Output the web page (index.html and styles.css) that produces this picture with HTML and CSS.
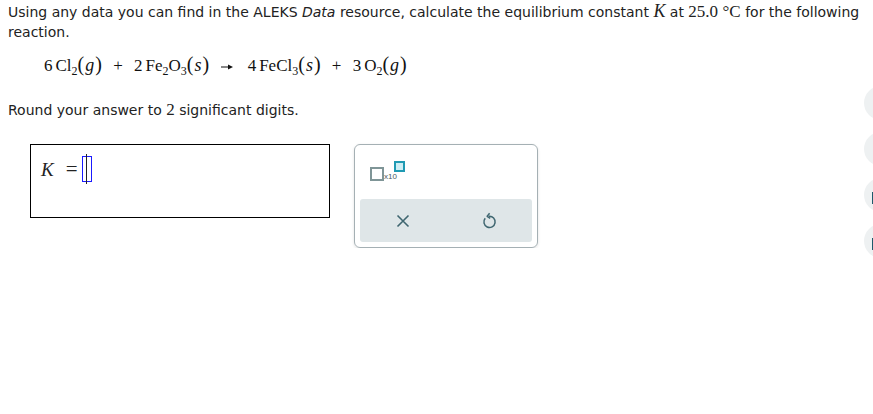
FILE: index.html
```html
<!DOCTYPE html>
<html>
<head>
<meta charset="utf-8">
<link rel="stylesheet" href="styles.css">
</head>
<body>
<div class="page">
  <p class="prompt">Using any data you can find in the ALEKS <i>Data</i> resource, calculate the equilibrium constant <span class="mi">K</span> at <span class="mn">25.0</span> <span class="mn">°C</span> for the following reaction.</p>
  <div class="equation">
    <span>6</span><span class="sp1"></span><span>Cl<sub>2</sub></span><span class="paren">(</span><i>g</i><span class="paren">)</span>
    <span class="op">+</span>
    <span>2</span><span class="sp1"></span><span>Fe<sub>2</sub>O<sub>3</sub></span><span class="paren">(</span><i>s</i><span class="paren">)</span>
    <svg class="arrow" width="12" height="8" viewBox="0 0 12 8"><path d="M0 4 H8" stroke="#111" stroke-width="1"/><path d="M7 1.5 L12 4 L7 6.5 Z" fill="#111"/></svg>
    <span>4</span><span class="sp1"></span><span>FeCl<sub>3</sub></span><span class="paren">(</span><i>s</i><span class="paren">)</span>
    <span class="op">+</span>
    <span>3</span><span class="sp1"></span><span>O<sub>2</sub></span><span class="paren">(</span><i>g</i><span class="paren">)</span>
  </div>
  <p class="round">Round your answer to <span class="mn">2</span> significant digits.</p>
  <div class="work">
    <div class="answer">
      <span class="kvar">K</span>
      <span class="eq">=</span>
      <span class="slot"><span class="caret"></span></span>
    </div>
    <div class="palette">
      <div class="palette-top">
        <span class="sci">
          <span class="box-big"></span>
          <span class="x10">x10</span>
          <span class="box-small"></span>
        </span>
      </div>
      <div class="palette-bar">
        <svg class="ico" width="14" height="14" viewBox="0 0 14 14"><path d="M1.5 1.5 L12.5 12.5 M12.5 1.5 L1.5 12.5" stroke="#3f6670" stroke-width="1.6" fill="none"/></svg>
        <svg class="ico" width="16" height="17" viewBox="0 0 16 17"><path d="M4.2 6.3 A5.6 5.6 0 1 0 8 4.3" stroke="#3f6670" stroke-width="1.5" fill="none"/><path d="M8.6 1.2 L6.2 4.3 L9.2 6.4" stroke="#3f6670" stroke-width="1.5" fill="none" stroke-linejoin="round"/></svg>
      </div>
    </div>
  </div>
</div>
<div class="side">
  <span class="side-btn"></span>
  <span class="side-btn"></span>
  <span class="side-btn"><span class="mark"></span></span>
  <span class="side-btn"><span class="mark"></span></span>
</div>
</body>
</html>
```

FILE: styles.css
```css
html, body {
  margin: 0;
  padding: 0;
  background: #ffffff;
}
body {
  font-family: "DejaVu Sans", Verdana, sans-serif;
  font-size: 14px;
  color: #222222;
  overflow: hidden;
}
.page {
  padding: 2px 8px 0 8px;
}
.prompt {
  margin: 0;
  line-height: 20px;
  width: 862px;
}
.mi {
  font-family: "Liberation Serif", serif;
  font-style: italic;
  font-size: 18px;
  line-height: 1;
}
.mn {
  font-family: "Liberation Serif", serif;
  font-size: 17px;
  line-height: 1;
}
.equation {
  font-family: "Liberation Serif", serif;
  font-size: 17px;
  color: #111;
  margin: 7px 0 0 36px;
  height: 30px;
  line-height: 30px;
  white-space: nowrap;
}
.equation sub {
  font-size: 12px;
  vertical-align: -4px;
  line-height: 0;
}
.equation i {
  font-size: 18px;
  margin: 0 1px;
}
.paren {
  font-size: 20px;
}
.sp1 {
  display: inline-block;
  width: 3px;
}
.op {
  margin: 0 7px;
}
.arrow {
  margin: 0 10px 0 8px;
  vertical-align: middle;
}
.round {
  margin: 21px 0 0 0;
  line-height: 20px;
}
.work {
  display: flex;
  align-items: flex-start;
  margin: 24px 0 0 22px;
}
.answer {
  width: 300px;
  height: 74px;
  border: 1px solid #000;
  display: flex;
  align-items: flex-start;
  padding: 11px 0 0 10px;
  box-sizing: border-box;
  font-family: "Liberation Serif", serif;
}
.kvar {
  font-style: italic;
  font-size: 19px;
  line-height: 24px;
  margin-top: 2px;
}
.eq {
  font-size: 21px;
  line-height: 24px;
  margin: 1px 0 0 12px;
}
.slot {
  position: relative;
  width: 8px;
  height: 24px;
  border: 1px solid #1a1aff;
  margin-left: 4px;
}
.caret {
  position: absolute;
  left: 3px;
  top: -3px;
  width: 1px;
  height: 30px;
  background: #222;
}
.palette {
  width: 184px;
  height: 104px;
  margin-left: 24px;
  border: 1px solid #a5b0b4;
  border-radius: 6px;
  box-shadow: 0 1px 3px rgba(0,0,0,0.12);
  box-sizing: border-box;
  padding: 0 5px 5px 5px;
  display: flex;
  flex-direction: column;
}
.palette-top {
  height: 54px;
  position: relative;
}
.sci {
  position: absolute;
  left: 10px;
  top: 16px;
  width: 40px;
  height: 22px;
}
.box-big {
  position: absolute;
  left: 0;
  top: 6px;
  width: 10px;
  height: 10px;
  border: 2px solid #7f9597;
}
.x10 {
  position: absolute;
  left: 14px;
  top: 11px;
  font-family: "Liberation Sans", Arial, sans-serif;
  font-size: 8px;
  color: #4a5a60;
}
.box-small {
  position: absolute;
  left: 24px;
  top: 0;
  width: 7px;
  height: 7px;
  border: 2px solid #1f9ab3;
  background: #cdeef4;
}
.palette-bar {
  flex: 1;
  background: #dfe6e8;
  border-radius: 3px;
  display: flex;
  justify-content: space-around;
  align-items: center;
  padding: 0;
}
.ico {
  display: block;
}
.side {
  position: absolute;
  left: 864px;
  top: 86px;
  display: flex;
  flex-direction: column;
  gap: 12px;
}
.side-btn {
  position: relative;
  width: 34px;
  height: 34px;
  border-radius: 50%;
  background: #eef1f2;
  display: block;
}
.mark {
  position: absolute;
  left: 8px;
  top: 14px;
  width: 2px;
  height: 12px;
  background: #1f5a6c;
}
```
